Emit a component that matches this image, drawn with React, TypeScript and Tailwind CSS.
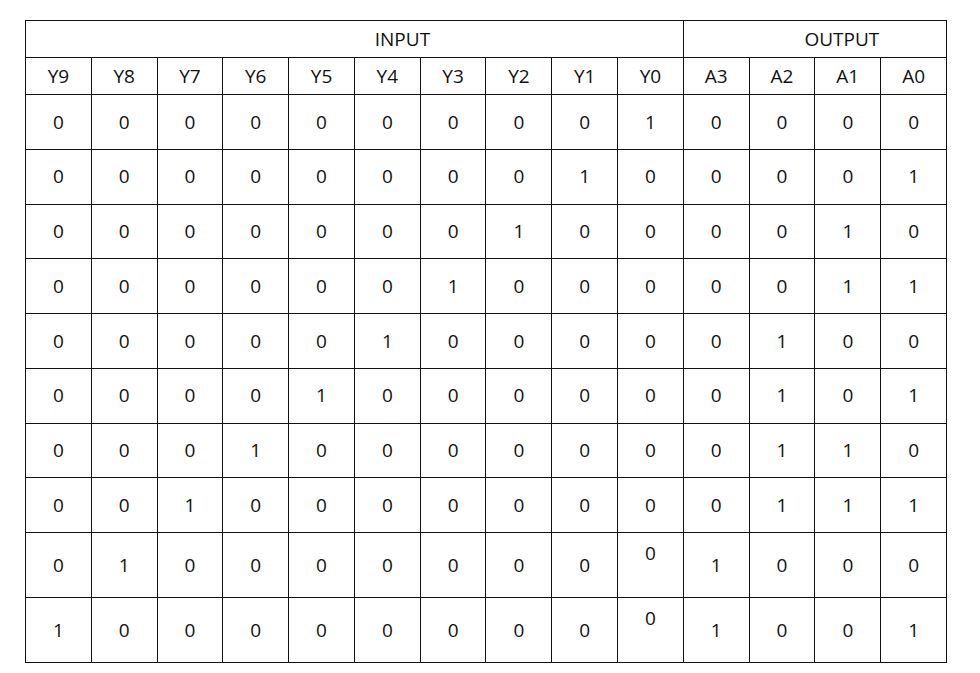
const headers = ["Y9", "Y8", "Y7", "Y6", "Y5", "Y4", "Y3", "Y2", "Y1", "Y0", "A3", "A2", "A1", "A0"];

const rows: string[][] = [
  "00000000010000",
  "00000000100001",
  "00000001000010",
  "00000010000011",
  "00000100000100",
  "00001000000101",
  "00010000000110",
  "00100000000111",
  "01000000001000",
  "10000000001001",
].map((r) => r.split(""));

const cell = "flex items-center justify-center border-r-[1.5px] border-b-[1.5px] border-[#111]";

export default function App() {
  return (
    <div className="min-h-[673px] bg-white pl-[25px] pt-[20px] text-[19px] text-[#111]" style={{ fontFamily: '"Open Sans", "Noto Sans", sans-serif' }}>
      <div className="grid w-[922px] grid-cols-[repeat(14,1fr)] grid-rows-[37px_37px_repeat(8,54.75px)_65px_65px] border-l-[1.5px] border-t-[1.5px] border-[#111]">
        <div className={`${cell} col-span-10 pl-[96px]`}>INPUT</div>
        <div className={`${cell} col-span-4 pl-[54px]`}>OUTPUT</div>
        {headers.map((h) => (
          <div key={h} className={cell}>
            {h}
          </div>
        ))}
        {rows.map((r, i) =>
          r.map((v, j) => {
            const raised = i >= 8 && j === 9;
            return (
              <div key={`${i}-${j}`} className={raised ? "flex items-start justify-center border-r-[1.5px] border-b-[1.5px] border-[#111] pt-[6px]" : cell}>
                {v}
              </div>
            );
          })
        )}
      </div>
    </div>
  );
}
